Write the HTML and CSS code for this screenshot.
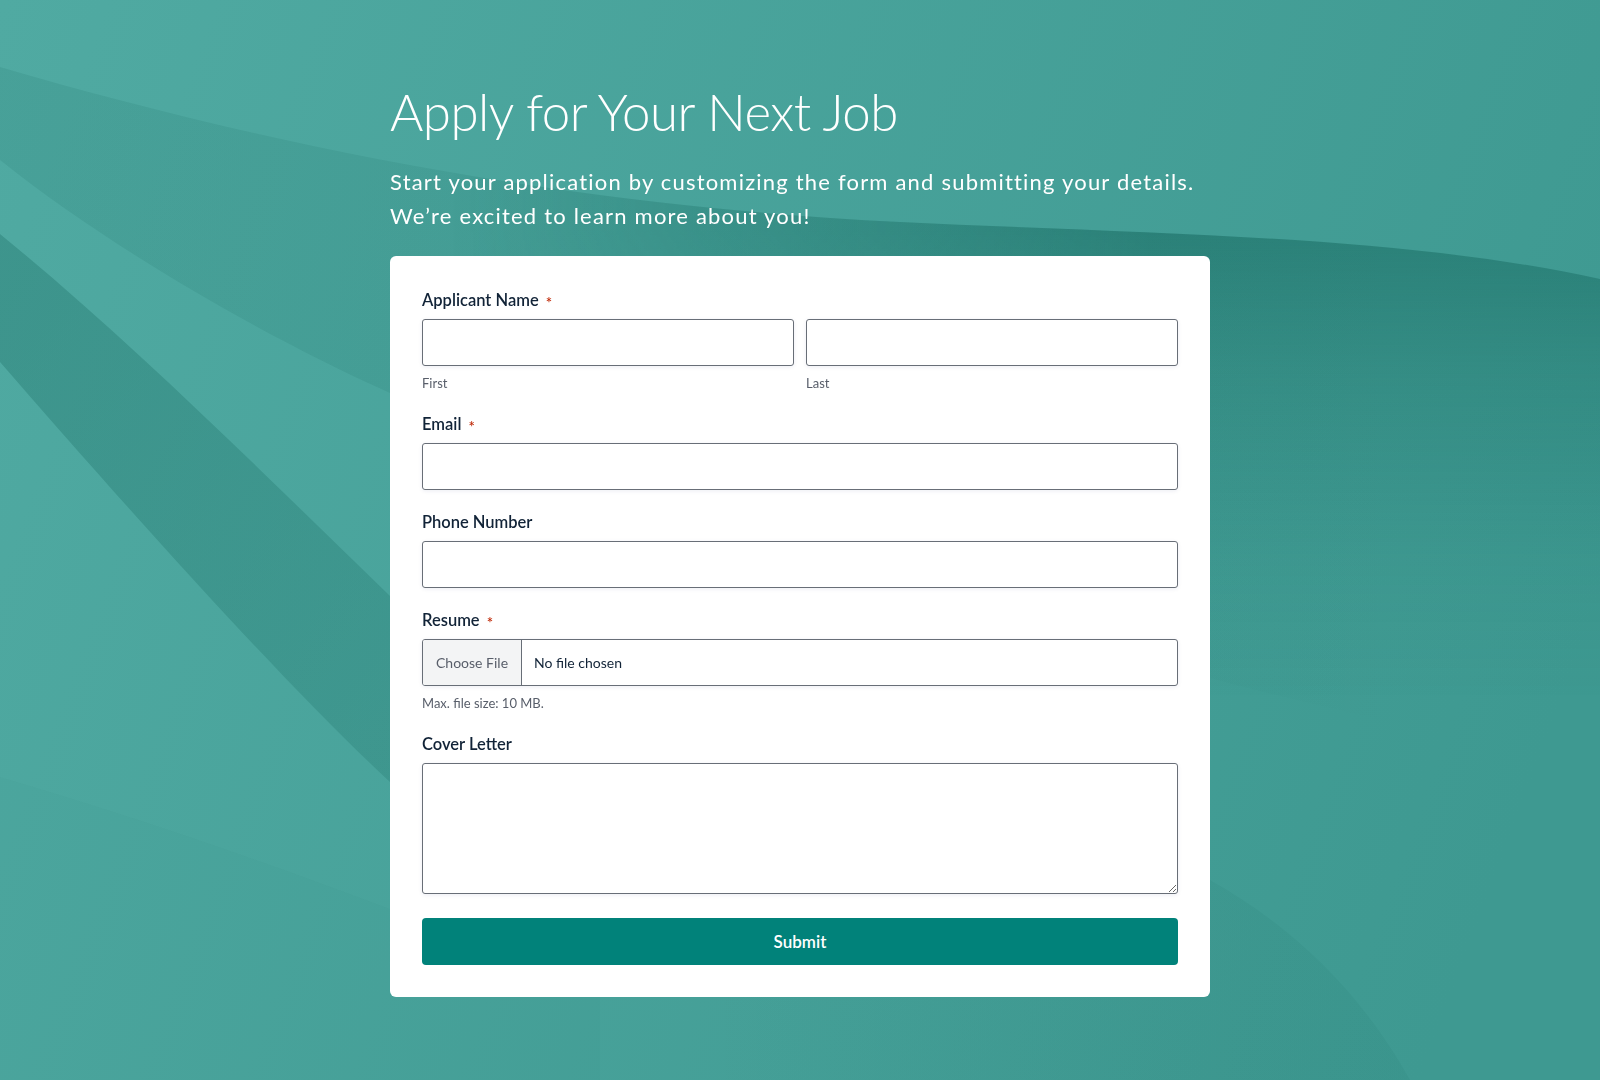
FILE: index.html
```html
<!DOCTYPE html>
<html lang="en">
<head>
<meta charset="utf-8">
<title>Apply for Your Next Job</title>
<link rel="stylesheet" href="styles.css">
</head>
<body>
<div class="bg" aria-hidden="true">
  <svg class="bg-art" viewBox="0 0 1600 1080" preserveAspectRatio="none">
    <defs>
      <linearGradient id="base" gradientUnits="userSpaceOnUse" x1="0" y1="0" x2="1600" y2="600">
        <stop offset="0" stop-color="#50aaa2"/>
        <stop offset="1" stop-color="#3e9991"/>
      </linearGradient>
      <linearGradient id="bandLeft" gradientUnits="userSpaceOnUse" x1="0" y1="0" x2="1400" y2="0">
        <stop offset="0" stop-color="#0e5e55" stop-opacity="0.12"/>
        <stop offset="0.5" stop-color="#0e5e55" stop-opacity="0.1"/>
        <stop offset="1" stop-color="#0e5e55" stop-opacity="0"/>
      </linearGradient>
      <linearGradient id="shadeRight" gradientUnits="userSpaceOnUse" x1="0" y1="230" x2="0" y2="700">
        <stop offset="0" stop-color="#0e5e55" stop-opacity="0.44"/>
        <stop offset="0.3" stop-color="#0e5e55" stop-opacity="0.24"/>
        <stop offset="0.7" stop-color="#0e5e55" stop-opacity="0.06"/>
        <stop offset="1" stop-color="#0e5e55" stop-opacity="0"/>
      </linearGradient>
      <linearGradient id="hfade" gradientUnits="userSpaceOnUse" x1="450" y1="0" x2="1150" y2="0">
        <stop offset="0" stop-color="#000"/>
        <stop offset="1" stop-color="#fff"/>
      </linearGradient>
      <mask id="rightMask">
        <rect width="1600" height="1080" fill="url(#hfade)"/>
      </mask>
      <linearGradient id="darkBand" gradientUnits="userSpaceOnUse" x1="0" y1="300" x2="400" y2="700">
        <stop offset="0" stop-color="#0e5e55" stop-opacity="0.27"/>
        <stop offset="1" stop-color="#0e5e55" stop-opacity="0.19"/>
      </linearGradient>
      <linearGradient id="bottomShade" gradientUnits="userSpaceOnUse" x1="700" y1="0" x2="1250" y2="0">
        <stop offset="0" stop-color="#0e5e55" stop-opacity="0"/>
        <stop offset="1" stop-color="#0e5e55" stop-opacity="0.07"/>
      </linearGradient>
    </defs>
    <rect width="1600" height="1080" fill="url(#base)"/>
    <path d="M0,67 C250,140 550,205 900,222 C1150,234 1400,235 1600,279 L1600,760 C1200,700 800,560 390,393 C250,330 100,240 0,160 Z" fill="url(#bandLeft)"/>
    <path d="M0,67 C250,140 550,205 900,222 C1150,234 1400,235 1600,279 L1600,1080 L0,1080 Z" fill="url(#shadeRight)" mask="url(#rightMask)"/>
    <path d="M0,234 C130,340 260,470 390,596 L700,800 L700,950 L390,782 C280,680 120,500 0,362 Z" fill="url(#darkBand)"/>
    <path d="M0,777 C130,815 260,860 390,909 L600,960 L600,1080 L0,1080 Z" fill="#0e5e55" fill-opacity="0.025"/>
    <path d="M700,860 L1210,880 C1290,925 1360,990 1410,1080 L700,1080 Z" fill="url(#bottomShade)"/>
  </svg>
</div>

<main class="page">
  <header class="intro">
    <h1 class="title">Apply for Your Next Job</h1>
    <p class="lead">Start your application by customizing the form and submitting your details.<br>We’re excited to learn more about you!</p>
  </header>

  <form class="card" onsubmit="return false">
    <div class="field">
      <div class="label">Applicant Name <span class="req">*</span></div>
      <div class="name-row">
        <div class="name-col">
          <input class="input" type="text" aria-label="First">
          <span class="sublabel">First</span>
        </div>
        <div class="name-col">
          <input class="input" type="text" aria-label="Last">
          <span class="sublabel">Last</span>
        </div>
      </div>
    </div>

    <div class="field">
      <div class="label">Email <span class="req">*</span></div>
      <input class="input" type="email" aria-label="Email">
    </div>

    <div class="field">
      <div class="label">Phone Number</div>
      <input class="input" type="tel" aria-label="Phone Number">
    </div>

    <div class="field">
      <div class="label">Resume <span class="req">*</span></div>
      <div class="file">
        <span class="file-btn">Choose File</span>
        <span class="file-name">No file chosen</span>
      </div>
      <span class="description">Max. file size: 10 MB.</span>
    </div>

    <div class="field">
      <div class="label">Cover Letter</div>
      <textarea class="input textarea" aria-label="Cover Letter"></textarea>
    </div>

    <button class="submit" type="button">Submit</button>
  </form>
</main>
</body>
</html>
```

FILE: styles.css
```css
html, body {
  margin: 0;
  padding: 0;
}

body {
  min-height: 1080px;
  font-family: "Lato", "Open Sans", "Liberation Sans", sans-serif;
  color: #112337;
  background: #46a199;
}

.bg {
  position: fixed;
  inset: 0;
  z-index: 0;
}

.bg-art {
  display: block;
  width: 100%;
  height: 100%;
}

.page {
  position: relative;
  z-index: 1;
  width: 820px;
  margin: 0 auto;
  padding-top: 81px;
}

.title {
  margin: 0 0 23px;
  font-size: 51px;
  line-height: 61px;
  font-weight: 300;
  color: #ffffff;
  letter-spacing: -0.5px;
}

.lead {
  margin: 0 0 23px;
  font-size: 22px;
  line-height: 34px;
  font-weight: 400;
  color: #ffffff;
  letter-spacing: 1.2px;
  white-space: nowrap;
}

.card {
  display: flex;
  flex-direction: column;
  gap: 19px;
  background: #ffffff;
  border-radius: 6px;
  padding: 31px 32px 32px;
}

.field {
  display: flex;
  flex-direction: column;
}

.label {
  font-size: 16.5px;
  line-height: 24px;
  font-weight: 600;
  color: #112337;
  padding-top: 1px;
  margin-bottom: 7px;
}

.req {
  color: #c02b0a;
  font-size: 15px;
  line-height: 1;
  margin-left: 3px;
  vertical-align: -2px;
}

.name-row {
  display: grid;
  grid-template-columns: 1fr 1fr;
  gap: 12px;
}

.name-col {
  display: flex;
  flex-direction: column;
}

.input {
  display: block;
  box-sizing: border-box;
  width: 100%;
  height: 47px;
  margin: 0;
  padding: 0 12px;
  border: 1px solid #686e77;
  border-radius: 3px;
  background: #ffffff;
  box-shadow: 0 1px 4px rgba(18, 25, 97, 0.077);
  font: inherit;
  font-size: 16px;
  color: #112337;
}

.textarea {
  height: 131px;
  padding: 12px;
  resize: vertical;
}

.sublabel,
.description {
  display: block;
  margin-top: 8px;
  font-size: 13px;
  line-height: 18px;
  color: #585e6a;
}

.file {
  display: flex;
  align-items: stretch;
  height: 47px;
  box-sizing: border-box;
  border: 1px solid #686e77;
  border-radius: 3px;
  overflow: hidden;
  background: #ffffff;
  box-shadow: 0 1px 4px rgba(18, 25, 97, 0.077);
}

.file-btn {
  display: flex;
  align-items: center;
  padding: 0 13px;
  background: #f3f4f5;
  border-right: 1px solid #686e77;
  color: #585e6a;
  font-size: 14px;
}

.file-name {
  display: flex;
  align-items: center;
  padding-left: 12px;
  color: #112337;
  font-size: 14px;
}

.submit {
  display: block;
  width: 100%;
  height: 47px;
  margin-top: 5px;
  border: 0;
  border-radius: 4px;
  background: #01827a;
  color: #ffffff;
  font-family: inherit;
  font-size: 17px;
  font-weight: 600;
  cursor: pointer;
}
```
